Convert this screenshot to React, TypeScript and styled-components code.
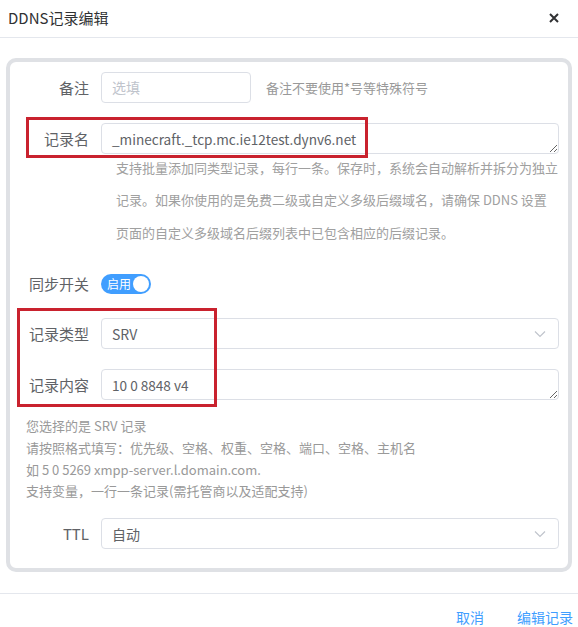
import React from "react";
import styled, { createGlobalStyle } from "styled-components";

const GlobalStyle = createGlobalStyle`
  html, body { margin: 0; padding: 0; background: #ffffff; }
  body {
    font-family: "Noto Sans CJK SC", "Noto Sans", sans-serif;
    color: #606266;
  }
  * { box-sizing: border-box; }
`;

const Dialog = styled.div`
  width: 578px;
  height: 627px;
  display: flex;
  flex-direction: column;
  background: #fff;
`;

const Header = styled.div`
  height: 39px;
  padding: 0 18px 0 8px;
  display: flex;
  align-items: center;
  justify-content: space-between;
  border-bottom: 1px solid #e4e7ed;
`;

const Title = styled.div`
  font-size: 15px;
  line-height: 20px;
  color: #303133;
`;

const CloseBtn = styled.button`
  border: 0;
  background: none;
  padding: 0;
  width: 12px;
  height: 12px;
  display: flex;
  align-items: center;
  justify-content: center;
  cursor: pointer;
`;

const Body = styled.div`
  padding: 20px 6px 0 6px;
`;

const Box = styled.div`
  position: relative;
  border: 4px solid #dfe1e5;
  border-radius: 10px;
  padding: 10px 9px 19px 0;
  display: flex;
  flex-direction: column;
`;

const Row = styled.div<{ $mt: number }>`
  display: grid;
  grid-template-columns: 79px 1fr;
  column-gap: 12px;
  align-items: center;
  margin-top: ${(p) => p.$mt}px;
`;

const Label = styled.label`
  text-align: right;
  font-size: 15px;
  line-height: 31px;
  color: #606266;
  white-space: nowrap;
`;

const Inline = styled.div`
  display: flex;
  align-items: center;
  gap: 15px;
`;

const TextInput = styled.input`
  width: 150px;
  height: 31px;
  border: 1px solid #dcdfe6;
  border-radius: 4px;
  padding: 0 10px;
  font-family: inherit;
  font-size: 14px;
  color: #606266;
  outline: none;
  &::placeholder { color: #c0c4cc; }
`;

const Hint = styled.span`
  font-size: 13px;
  color: #999;
  white-space: nowrap;
`;

const TextArea = styled.textarea`
  display: block;
  width: 100%;
  height: 31px;
  border: 1px solid #dcdfe6;
  border-radius: 4px;
  padding: 5px 10px;
  font-family: inherit;
  font-size: 13.6px;
  line-height: 20px;
  color: #606266;
  resize: vertical;
  outline: none;
  overflow: hidden;
`;

const Help = styled.div`
  grid-column: 2;
  margin-top: -2px;
  padding-left: 15px;
  font-size: 13px;
  line-height: 32.5px;
  color: #a0a0a0;
`;

const Line = styled.div`
  white-space: nowrap;
`;

const Select = styled.div`
  height: 31px;
  border: 1px solid #dcdfe6;
  border-radius: 4px;
  padding: 0 12px 0 10px;
  display: flex;
  align-items: center;
  justify-content: space-between;
  font-size: 14px;
  color: #606266;
`;

const Switch = styled.span`
  width: 50px;
  height: 20px;
  border-radius: 10px;
  background: #409eff;
  display: flex;
  align-items: center;
  justify-content: space-between;
  padding: 0 2px 0 6px;
  color: #fff;
  font-size: 12px;
  line-height: 20px;
`;

const Knob = styled.span`
  width: 16px;
  height: 16px;
  border-radius: 50%;
  background: #fff;
`;

const Info = styled.div`
  margin-top: 15px;
  padding-left: 16px;
  font-size: 13px;
  line-height: 21.7px;
  color: #999;
`;

const Mark = styled.div<{ $l: number; $t: number; $w: number; $h: number }>`
  position: absolute;
  left: ${(p) => p.$l}px;
  top: ${(p) => p.$t}px;
  width: ${(p) => p.$w}px;
  height: ${(p) => p.$h}px;
  border: 3px solid #c9222e;
  pointer-events: none;
`;

const Footer = styled.div`
  margin-top: 21px;
  border-top: 1px solid #e4e7ed;
  padding: 13px 5px 0 0;
  display: flex;
  justify-content: flex-end;
  gap: 33px;
`;

const TextButton = styled.button`
  border: 0;
  background: none;
  padding: 0;
  font-family: inherit;
  font-size: 14px;
  line-height: 20px;
  color: #409eff;
  cursor: pointer;
`;

const Chevron = () => (
  <svg width="12" height="8" viewBox="0 0 12 8" fill="none">
    <polyline points="1,1.5 6,6.5 11,1.5" stroke="#c0c4cc" strokeWidth="1.2" />
  </svg>
);

export default function App() {
  return (
    <>
      <GlobalStyle />
      <Dialog>
        <Header>
          <Title>DDNS记录编辑</Title>
          <CloseBtn aria-label="close">
            <svg width="10" height="10" viewBox="0 0 10 10">
              <path d="M1 1 L9 9 M9 1 L1 9" stroke="#303133" strokeWidth="2" />
            </svg>
          </CloseBtn>
        </Header>
        <Body>
          <Box>
            <Row $mt={0}>
              <Label>备注</Label>
              <Inline>
                <TextInput placeholder="选填" readOnly />
                <Hint>备注不要使用*号等特殊符号</Hint>
              </Inline>
            </Row>
            <Row $mt={20}>
              <Label>记录名</Label>
              <TextArea readOnly value="_minecraft._tcp.mc.ie12test.dynv6.net" />
              <Help>
                <Line>支持批量添加同类型记录，每行一条。保存时，系统会自动解析并拆分为独立</Line>
                <Line>记录。如果你使用的是免费二级或自定义多级后缀域名，请确保 DDNS 设置</Line>
                <Line>页面的自定义多级域名后缀列表中已包含相应的后缀记录。</Line>
              </Help>
            </Row>
            <Row $mt={19}>
              <Label>同步开关</Label>
              <Inline>
                <Switch>
                  启用
                  <Knob />
                </Switch>
              </Inline>
            </Row>
            <Row $mt={19}>
              <Label>记录类型</Label>
              <Select>
                <span>SRV</span>
                <Chevron />
              </Select>
            </Row>
            <Row $mt={20}>
              <Label>记录内容</Label>
              <TextArea readOnly value="10 0 8848 v4" />
            </Row>
            <Info>
              <Line>您选择的是 SRV 记录</Line>
              <Line>请按照格式填写：优先级、空格、权重、空格、端口、空格、主机名</Line>
              <Line>如 5 0 5269 xmpp-server.l.domain.com.</Line>
              <Line>支持变量，一行一条记录(需托管商以及适配支持)</Line>
            </Info>
            <Row $mt={16}>
              <Label>TTL</Label>
              <Select>
                <span>自动</span>
                <Chevron />
              </Select>
            </Row>
            <Mark $l={16} $t={55} $w={342} $h={41} />
            <Mark $l={7} $t={246} $w={200} $h={99} />
          </Box>
        </Body>
        <Footer>
          <TextButton>取消</TextButton>
          <TextButton>编辑记录</TextButton>
        </Footer>
      </Dialog>
    </>
  );
}
